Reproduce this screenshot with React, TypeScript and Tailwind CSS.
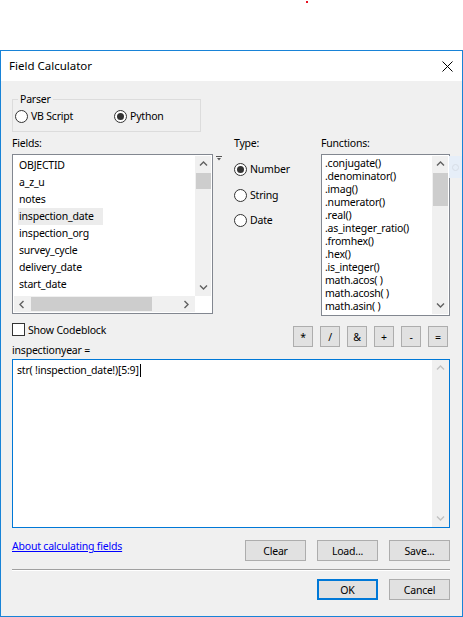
import type { ReactNode } from "react";

const fields = [
  "OBJECTID",
  "a_z_u",
  "notes",
  "inspection_date",
  "inspection_org",
  "survey_cycle",
  "delivery_date",
  "start_date",
];

const functions = [
  ".conjugate()",
  ".denominator()",
  ".imag()",
  ".numerator()",
  ".real()",
  ".as_integer_ratio()",
  ".fromhex()",
  ".hex()",
  ".is_integer()",
  "math.acos( )",
  "math.acosh( )",
  "math.asin( )",
  "math.asinh( )",
];

const operators = ["*", "/", "&", "+", "-", "="];

function Chevron({ dir, color = "#606060" }: { dir: "up" | "down" | "left" | "right"; color?: string }) {
  const d = {
    up: "M1 5.5 L4.5 2 L8 5.5",
    down: "M1 2.5 L4.5 6 L8 2.5",
    left: "M5.5 1 L2 4.5 L5.5 8",
    right: "M2.5 1 L6 4.5 L2.5 8",
  }[dir];
  return (
    <svg width="9" height="9" viewBox="0 0 9 9" fill="none">
      <path d={d} stroke={color} strokeWidth="1.4" />
    </svg>
  );
}

function Radio({ checked }: { checked?: boolean }) {
  return (
    <span className="flex h-[13px] w-[13px] shrink-0 items-center justify-center rounded-full border border-[#333333] bg-white">
      {checked && <span className="h-[7px] w-[7px] rounded-full bg-[#333333]" />}
    </span>
  );
}

function RadioLabel({ checked, children }: { checked?: boolean; children: ReactNode }) {
  return (
    <div className="flex h-[14px] items-center gap-[3px]">
      <Radio checked={checked} />
      <span className="leading-[14px]">{children}</span>
    </div>
  );
}

function Btn({ children, w = "w-[61px]", focused }: { children: ReactNode; w?: string; focused?: boolean }) {
  return (
    <div
      className={`flex h-[21px] ${w} items-center justify-center bg-[#e1e1e1] leading-[14px] ${
        focused ? "border-2 border-[#0078d7]" : "border border-[#adadad]"
      }`}
    >
      {children}
    </div>
  );
}

export default function App() {
  return (
    <div className="h-[617px] w-[463px] overflow-hidden bg-white font-['Noto_Sans',sans-serif] text-[10.5px] tracking-[-0.2px] text-black">
      {/* area above the window */}
      <div className="h-[50px] pl-[306px] pt-[1px]">
        <div className="h-[2px] w-[2px] bg-[#e81123]" />
      </div>

      {/* window */}
      <div className="flex h-[567px] flex-col border border-[#1883d7]">
        {/* title bar */}
        <div className="flex h-[30px] shrink-0 items-center justify-between bg-white pl-[8px] pr-[9px]">
          <span className="text-[11.5px] tracking-normal">Field Calculator</span>
          <svg width="11" height="11" viewBox="0 0 11 11" fill="none">
            <path d="M0.5 0.5 L10.5 10.5 M10.5 0.5 L0.5 10.5" stroke="#000" strokeWidth="1" />
          </svg>
        </div>

        {/* body */}
        <div className="relative flex flex-1 flex-col bg-[#f0f0f0] pl-[11px] pr-[12px]">
          {/* faint overlay artifact at the right edge */}
          <div className="absolute right-0 top-[75px] flex h-[22px] w-[13px] items-center justify-center bg-[#e6eef8]">
            <span className="h-[7px] w-[7px] rounded-full border border-[#d6dde6]" />
          </div>

          {/* Parser group */}
          <div className="relative mt-[18px] h-[33px] w-[189px] border border-[#dcdcdc]">
            <span className="absolute -top-[8px] left-[5px] bg-[#f0f0f0] px-[2px] leading-[14px]">Parser</span>
            <div className="flex pl-[2px] pt-[9px]">
              <div className="w-[99px]">
                <RadioLabel>VB Script</RadioLabel>
              </div>
              <RadioLabel checked>Python</RadioLabel>
            </div>
          </div>

          {/* fields / type / functions */}
          <div className="mt-[4px] flex items-start">
            <div className="flex w-[201px] flex-col">
              <span className="leading-[14px]">Fields:</span>
              <div className="mt-[4px] flex h-[160px] flex-col border border-[#828790] bg-white p-[1px]">
                <div className="flex min-h-0 flex-1">
                  <div className="flex-1 overflow-hidden pl-[4px] pt-[1px]">
                    {fields.map((f) => (
                      <div key={f} className="flex h-[17px] items-center">
                        <span
                          className={`px-[1px] leading-[17px] ${
                            f === "inspection_date" ? "w-[85px] bg-[#ececec]" : ""
                          }`}
                        >
                          {f}
                        </span>
                      </div>
                    ))}
                  </div>
                  <div className="flex w-[16px] flex-col items-center bg-[#f0f0f0]">
                    <div className="flex h-[17px] items-center">
                      <Chevron dir="up" />
                    </div>
                    <div className="h-[16px] w-[15px] bg-[#cdcdcd]" />
                    <div className="flex-1" />
                    <div className="flex h-[17px] items-center">
                      <Chevron dir="down" />
                    </div>
                  </div>
                </div>
                <div className="flex h-[16px]">
                  <div className="flex flex-1 items-center bg-[#f0f0f0]">
                    <div className="flex w-[17px] justify-center">
                      <Chevron dir="left" />
                    </div>
                    <div className="h-[14px] w-[121px] bg-[#cdcdcd]" />
                    <div className="flex-1" />
                    <div className="flex w-[17px] justify-center">
                      <Chevron dir="right" />
                    </div>
                  </div>
                  <div className="w-[16px] bg-white" />
                </div>
              </div>
            </div>

            <div className="w-[21px] pl-[3px] pt-[20px]">
              <svg width="6" height="5" viewBox="0 0 6 5">
                <path d="M0 0.5 H6" stroke="#555" strokeWidth="1" />
                <path d="M1 2 L5 2 L3 4.5 Z" fill="#555" />
              </svg>
            </div>

            <div className="flex w-[87px] flex-col">
              <span className="leading-[14px]">Type:</span>
              <div className="mt-[12px]">
                <RadioLabel checked>Number</RadioLabel>
              </div>
              <div className="mt-[12px]">
                <RadioLabel>String</RadioLabel>
              </div>
              <div className="mt-[11px]">
                <RadioLabel>Date</RadioLabel>
              </div>
            </div>

            <div className="flex w-[129px] flex-col">
              <span className="leading-[14px]">Functions:</span>
              <div className="mt-[4px] flex h-[162px] border border-[#828790] bg-white p-[1px]">
                <div className="flex-1 overflow-hidden pl-[2px] pt-[1px]">
                  {functions.map((f) => (
                    <div key={f} className="h-[13px] whitespace-nowrap leading-[13px]">
                      {f}
                    </div>
                  ))}
                </div>
                <div className="flex w-[16px] flex-col items-center bg-[#f0f0f0]">
                  <div className="flex h-[17px] items-center">
                    <Chevron dir="up" />
                  </div>
                  <div className="h-[33px] w-[15px] bg-[#cdcdcd]" />
                  <div className="flex-1" />
                  <div className="flex h-[17px] items-center">
                    <Chevron dir="down" />
                  </div>
                </div>
              </div>
            </div>
          </div>

          {/* codeblock row + operators */}
          <div className="flex items-start justify-between">
            <div className="flex flex-col">
              <div className="mt-[7px] flex h-[13px] items-center gap-[3px]">
                <span className="h-[13px] w-[13px] border border-[#333333] bg-white" />
                <span className="leading-[14px]">Show Codeblock</span>
              </div>
              <span className="mt-[7px] leading-[14px]">inspectionyear =</span>
            </div>
            <div className="mr-[2px] mt-[10px] flex gap-[7px]">
              {operators.map((o) => (
                <Btn key={o} w="w-[20px]">
                  {o}
                </Btn>
              ))}
            </div>
          </div>

          {/* expression box */}
          <div className="mt-[2px] flex h-[169px] border border-[#0078d7] bg-white">
            <div className="flex flex-1 items-start pl-[4px] pt-[3px]">
              <span className="leading-[14px]">str( !inspection_date!)[5:9]</span>
              <span className="ml-[1px] mt-[1px] h-[13px] w-[1px] bg-black" />
            </div>
            <div className="flex w-[17px] flex-col items-center justify-between bg-[#f0f0f0] py-[4px]">
              <Chevron dir="up" color="#c1c1c1" />
              <Chevron dir="down" color="#c1c1c1" />
            </div>
          </div>

          {/* link + clear/load/save */}
          <div className="mt-[12px] flex items-start">
            <span className="mt-[-1px] leading-[14px] text-[#0000ff] underline">About calculating fields</span>
            <div className="ml-auto flex gap-[11px]">
              <Btn>Clear</Btn>
              <Btn>Load...</Btn>
              <Btn>Save...</Btn>
            </div>
          </div>

          <div className="mt-[8px] h-[2px] border-b border-t border-b-white border-t-[#a0a0a0]" />

          <div className="mt-[8px] flex justify-end gap-[11px]">
            <Btn focused>OK</Btn>
            <Btn>Cancel</Btn>
          </div>
        </div>
      </div>
    </div>
  );
}
